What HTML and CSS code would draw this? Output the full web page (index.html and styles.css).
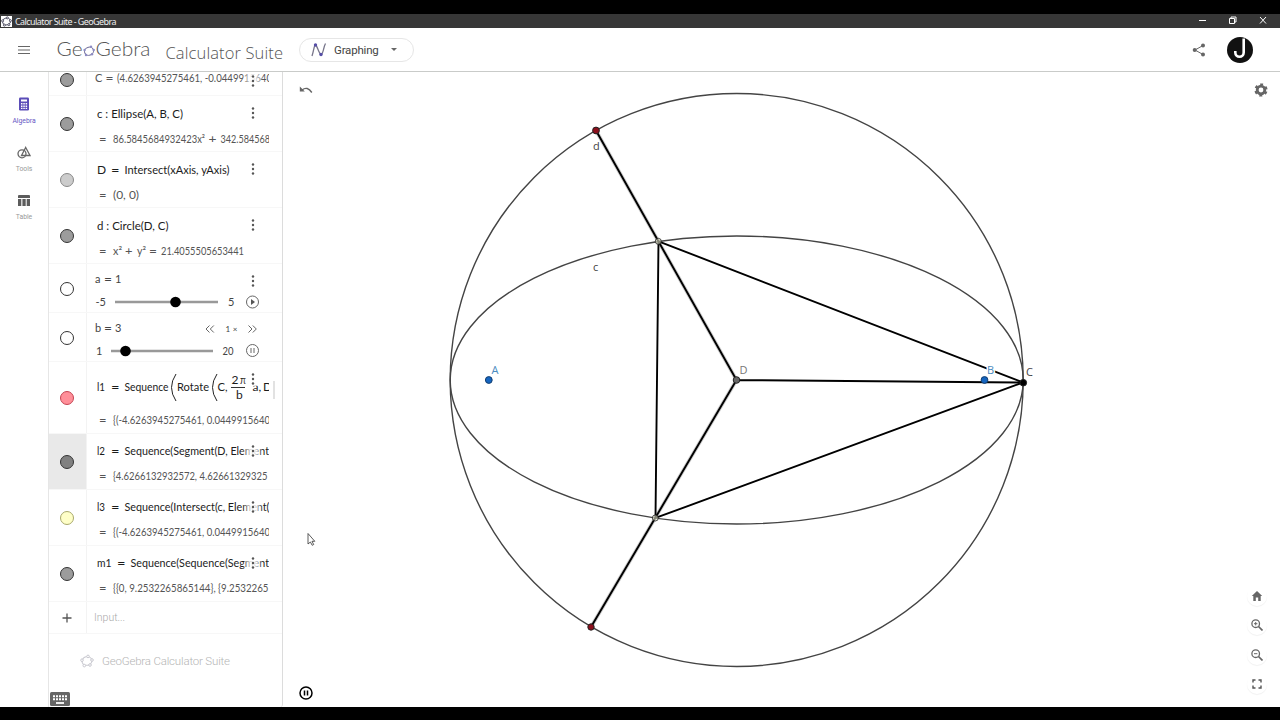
FILE: index.html
```
<!DOCTYPE html>
<html lang="en">
<head>
    <meta charset="UTF-8">
    <meta name="viewport" content="width=device-width, initial-scale=1.0">
    <title>Calculator Suite - GeoGebra</title>
    <link rel="stylesheet" href="styles.css">
</head>
<body>
    <svg width="0" height="0" class="defs">
        <symbol id="ggb" viewBox="0 0 14 14">
            <ellipse cx="7" cy="7" rx="5" ry="4.3" transform="rotate(-15 7 7)" fill="none" stroke="currentColor"/>
            <g fill="#fff" stroke="currentColor">
                <circle cx="8" cy="2.4" r="1.3"/><circle cx="12" cy="6" r="1.3"/><circle cx="10" cy="11" r="1.3"/>
                <circle cx="4.3" cy="11.6" r="1.3"/><circle cx="2" cy="6.2" r="1.3"/>
            </g>
        </symbol>
        <symbol id="dots" viewBox="0 0 4 14">
            <circle cx="2" cy="2.5" r="1.2"/><circle cx="2" cy="7" r="1.2"/><circle cx="2" cy="11.500" r="1.2"/>
        </symbol>
    </svg>

    <div class="titlebar">
        <div class="app-icon"><svg width="11" height="11"><use href="#ggb"/></svg></div>
        <span class="app-title">Calculator Suite - GeoGebra</span>
        <svg class="window-buttons" width="80" height="14" fill="none" stroke="#fff">
            <path d="M7 6.5h7"/>
            <path d="M37.5 4.5h5v5h-5zM39 4.500v-1.500h5v5h-1.500"/>
            <path d="M68 3l6 6.500M74 3l-6 6.500"/>
        </svg>
    </div>

    <header class="header">
        <svg class="menu" width="12" height="10" stroke="#666"><path d="M0 1.500h12M0 5h12M0 8.500h12"/></svg>
        <svg class="logo" width="236" height="30" viewBox="52 35 236 30">
            <text class="brand" x="56.500" y="56" textLength="26" lengthAdjust="spacingAndGlyphs">Ge</text>
            <ellipse cx="89" cy="51.200" rx="4.600" ry="4" transform="rotate(-20 89 51.200)" fill="none" stroke="#77759c"/>
            <g fill="#8d8bc4"><circle cx="91" cy="46.800" r="1.200"/><circle cx="93.700" cy="50" r="1.200"/><circle cx="92" cy="54.300" r="1.200"/><circle cx="86" cy="55" r="1.200"/><circle cx="84.600" cy="50" r="1.200"/></g>
            <text class="brand" x="95.500" y="56" textLength="55" lengthAdjust="spacingAndGlyphs">Gebra</text>
            <text class="suite" x="165.500" y="58.500" textLength="117.500">Calculator Suite</text>
        </svg>
        <div class="app-picker">
            <svg width="16" height="16" fill="none" stroke="#77758a" stroke-width="1.300">
                <path d="M1 14C3 8 3 3 4.500 3S8 12 10 12.500 12.500 5 14.500 1.500"/>
                <g fill="#554da6" stroke="none"><circle cx="4.500" cy="3" r="1.700"/><circle cx="10" cy="12.500" r="1.700"/></g>
            </svg>
            <span>Graphing</span>
            <i class="caret"></i>
        </div>
        <svg class="share" width="14" height="14" fill="#666" stroke="#666">
            <path d="M11 2.500L3 7l8 4.500" fill="none"/>
            <g stroke="none"><circle cx="11" cy="2.500" r="2"/><circle cx="2.700" cy="7" r="2"/><circle cx="11" cy="11.500" r="2"/></g>
        </svg>
        <svg class="avatar" width="26" height="26">
            <circle cx="13" cy="13" r="13" fill="#111"/>
            <path d="M16.700 1.500V15.500a4.200 4.200 0 0 1-8.400 0V14" fill="none" stroke="#fff" stroke-width="2.600"/>
        </svg>
    </header>

    <main class="main">
        <nav class="rail">
            <a class="tab active">
                <svg width="12" height="14">
                    <rect x="1" y=".5" width="10" height="13" rx="1.200" fill="#5b4db8"/>
                    <path d="M3 2.500h6v2H3zM3 6h1.500v1.500H3zM5.300 6h1.500v1.500H5.300zM7.600 6h1.500v1.500H7.600zM3 8.400h1.500v1.500H3zM5.300 8.400h1.500v1.500H5.300zM7.600 8.400h1.500v1.500H7.600zM3 10.700h1.500v1.300H3zM5.300 10.700h1.500v1.300H5.300zM7.600 10.700h1.500v1.300H7.600z" fill="#fff"/>
                </svg>
                <span>Algebra</span>
            </a>
            <a class="tab">
                <svg width="14" height="14" fill="none" stroke="#666" stroke-width="1.300">
                    <circle cx="5" cy="8.800" r="4"/><path d="M8.700 2.500l4.300 8H4.500z"/>
                </svg>
                <span>Tools</span>
            </a>
            <a class="tab">
                <svg width="14" height="14" fill="#5c5c5c"><path d="M1 3q0-1 1-1h10q1 0 1 1v2H1zM1 6h3.300v7H1zM5.400 6h3.300v7H5.400zM9.700 6H13v7H9.700z"/></svg>
                <span>Table</span>
            </a>
        </nav>

        <section class="algebra">
            <div class="row row-cut">
                <div class="marble"><i></i></div>
                <svg class="math value" width="182" height="32" viewBox="87 64 182 32">
                    <text x="95" y="82" textLength="7">C</text><text x="105.500" y="82" textLength="8" lengthAdjust="spacingAndGlyphs">=</text>
                    <text x="117" y="82" textLength="155" lengthAdjust="spacingAndGlyphs">(4.6263945275461, -0.0449915640</text>
                </svg>
                <svg class="more"><use href="#dots"/></svg>
            </div>
            <div class="row">
                <div class="marble"><i></i></div>
                <svg class="math" width="182" height="56" viewBox="87 96 182 56">
                    <text x="97" y="118" textLength="86" lengthAdjust="spacingAndGlyphs">c : Ellipse(A, B, C)</text>
                    <g class="value"><text x="99" y="142.500" textLength="7.500" lengthAdjust="spacingAndGlyphs">=</text>
                    <text x="113" y="142.500" textLength="92" lengthAdjust="spacingAndGlyphs">86.5845684932423x²</text>
                    <text x="208.500" y="142.500" textLength="8" lengthAdjust="spacingAndGlyphs">+</text>
                    <text x="220.500" y="142.500" textLength="49.500" lengthAdjust="spacingAndGlyphs">342.584568</text></g>
                </svg>
                <svg class="more"><use href="#dots"/></svg>
            </div>
            <div class="row">
                <div class="marble"><i class="light"></i></div>
                <svg class="math" width="182" height="56" viewBox="87 152 182 56">
                    <text x="97" y="174">D</text><text x="111" y="174" textLength="8.500" lengthAdjust="spacingAndGlyphs">=</text>
                    <text x="124.500" y="174" textLength="105" lengthAdjust="spacingAndGlyphs">Intersect(xAxis, yAxis)</text>
                    <g class="value"><text x="99" y="198.500" textLength="7.500" lengthAdjust="spacingAndGlyphs">=</text>
                    <text x="113" y="198.500" textLength="26" lengthAdjust="spacingAndGlyphs">(0, 0)</text></g>
                </svg>
                <svg class="more"><use href="#dots"/></svg>
            </div>
            <div class="row">
                <div class="marble"><i></i></div>
                <svg class="math" width="182" height="56" viewBox="87 208 182 56">
                    <text x="97" y="230" textLength="71.500" lengthAdjust="spacingAndGlyphs">d : Circle(D, C)</text>
                    <g class="value"><text x="99" y="254.500" textLength="7.500" lengthAdjust="spacingAndGlyphs">=</text>
                    <text x="113" y="254.500" textLength="9" lengthAdjust="spacingAndGlyphs">x²</text>
                    <text x="125" y="254.500" textLength="7.500" lengthAdjust="spacingAndGlyphs">+</text>
                    <text x="137" y="254.500" textLength="9" lengthAdjust="spacingAndGlyphs">y²</text>
                    <text x="149" y="254.500" textLength="8" lengthAdjust="spacingAndGlyphs">=</text>
                    <text x="161" y="254.500" textLength="83" lengthAdjust="spacingAndGlyphs">21.4055505653441</text></g>
                </svg>
                <svg class="more"><use href="#dots"/></svg>
            </div>
            <div class="row row-slider">
                <div class="marble"><i class="empty"></i></div>
                <svg class="math slider" width="182" height="49" viewBox="87 264 182 49">
                    <text x="95" y="282.500">a</text><text x="104" y="282.500" textLength="8" lengthAdjust="spacingAndGlyphs">=</text><text x="115" y="282.500">1</text>
                    <text x="95.500" y="305.500">-5</text><text x="228" y="305.500">5</text>
                    <path d="M115 302h103" class="track"/><circle cx="175.500" cy="302" r="5.300" fill="#000"/>
                    <circle cx="252.500" cy="302" r="6" class="ring"/><path d="M251 299l4 3-4 3z" fill="#555"/>
                </svg>
                <svg class="more"><use href="#dots"/></svg>
            </div>
            <div class="row row-slider">
                <div class="marble"><i class="empty"></i></div>
                <svg class="math slider" width="182" height="49" viewBox="87 313 182 49">
                    <text x="95" y="332">b</text><text x="104" y="332" textLength="8" lengthAdjust="spacingAndGlyphs">=</text><text x="115" y="332">3</text>
                    <text x="96" y="354.500">1</text><text x="222.500" y="354.500" textLength="11" lengthAdjust="spacingAndGlyphs">20</text>
                    <path d="M209.500 325.500l-3.500 3.500 3.500 3.500M213.800 325.500l-3.500 3.500 3.500 3.500M248.500 325.500l3.500 3.500-3.500 3.500M252.800 325.500l3.500 3.500-3.500 3.500" class="ring"/>
                    <text x="225.500" y="332" class="speed" textLength="12">1 ×</text>
                    <path d="M111 351h102" class="track"/><circle cx="125.500" cy="351" r="5.300" fill="#000"/>
                    <circle cx="252.500" cy="350.500" r="6" class="ring"/><path d="M251 348v5M254 348v5" class="ring"/>
                </svg>
            </div>
            <div class="row row-tall">
                <div class="marble"><i class="red"></i></div>
                <svg class="math" width="182" height="72" viewBox="87 362 182 72">
                    <text x="97" y="391" textLength="8" lengthAdjust="spacingAndGlyphs">l1</text><text x="111" y="391" textLength="8.500" lengthAdjust="spacingAndGlyphs">=</text>
                    <text x="124.500" y="391" textLength="44" lengthAdjust="spacingAndGlyphs">Sequence</text>
                    <path d="M176 374q-9 13.500 0 27M217 374q-9 13.500 0 27" fill="none" stroke="#222"/>
                    <text x="177" y="391" textLength="32" lengthAdjust="spacingAndGlyphs">Rotate</text>
                    <text x="217.500" y="391" textLength="10" lengthAdjust="spacingAndGlyphs">C,</text>
                    <text x="231.500" y="383.500">2</text><text x="240" y="383.500" textLength="6" lengthAdjust="spacingAndGlyphs">π</text>
                    <path d="M231 387.500h14" stroke="#333"/><text x="236" y="399">b</text>
                    <text x="252.500" y="391">a,</text><text x="263" y="391">D</text>
                    <g class="value"><text x="99" y="423.500" textLength="7.500" lengthAdjust="spacingAndGlyphs">=</text>
                    <text x="113" y="423.500" textLength="157" lengthAdjust="spacingAndGlyphs">{(-4.6263945275461, 0.0449915640</text></g>
                </svg>
                <svg class="more"><use href="#dots"/></svg>
                <b class="scroll-mark"></b>
            </div>
            <div class="row selected">
                <div class="marble"><i class="dark"></i></div>
                <svg class="math" width="182" height="56" viewBox="87 434 182 56">
                    <text x="97" y="455" textLength="8" lengthAdjust="spacingAndGlyphs">l2</text><text x="111" y="455" textLength="8.500" lengthAdjust="spacingAndGlyphs">=</text>
                    <text x="124.500" y="455" textLength="144.500" lengthAdjust="spacingAndGlyphs">Sequence(Segment(D, Element</text>
                    <g class="value"><text x="99" y="479.500" textLength="7.500" lengthAdjust="spacingAndGlyphs">=</text>
                    <text x="113" y="479.500" textLength="154.500" lengthAdjust="spacingAndGlyphs">{4.6266132932572, 4.62661329325</text></g>
                </svg>
                <svg class="more"><use href="#dots"/></svg>
            </div>
            <div class="row">
                <div class="marble"><i class="yellow"></i></div>
                <svg class="math" width="182" height="56" viewBox="87 490 182 56">
                    <text x="97" y="511" textLength="8" lengthAdjust="spacingAndGlyphs">l3</text><text x="111" y="511" textLength="8.500" lengthAdjust="spacingAndGlyphs">=</text>
                    <text x="124.500" y="511" textLength="145" lengthAdjust="spacingAndGlyphs">Sequence(Intersect(c, Element(</text>
                    <g class="value"><text x="99" y="535.500" textLength="7.500" lengthAdjust="spacingAndGlyphs">=</text>
                    <text x="113" y="535.500" textLength="157" lengthAdjust="spacingAndGlyphs">{(-4.6263945275461, 0.0449915640</text></g>
                </svg>
                <svg class="more"><use href="#dots"/></svg>
            </div>
            <div class="row">
                <div class="marble"><i></i></div>
                <svg class="math" width="182" height="56" viewBox="87 546 182 56">
                    <text x="97" y="567" textLength="14.500" lengthAdjust="spacingAndGlyphs">m1</text><text x="117" y="567" textLength="8.500" lengthAdjust="spacingAndGlyphs">=</text>
                    <text x="130.500" y="567" textLength="138.500" lengthAdjust="spacingAndGlyphs">Sequence(Sequence(Segment</text>
                    <g class="value"><text x="99" y="591.500" textLength="7.500" lengthAdjust="spacingAndGlyphs">=</text>
                    <text x="113" y="591.500" textLength="155.500" lengthAdjust="spacingAndGlyphs">{{0, 9.2532265865144}, {9.2532265</text></g>
                </svg>
                <svg class="more"><use href="#dots"/></svg>
            </div>
            <div class="row row-input">
                <div class="marble"><svg width="10" height="10" stroke="#555" stroke-width="1.300"><path d="M5 .5v9M.5 5h9"/></svg></div>
                <span class="placeholder">Input...</span>
            </div>
            <div class="watermark">
                <svg width="14" height="14"><use href="#ggb"/></svg>
                <svg width="130" height="18"><text x="1" y="13" textLength="128">GeoGebra Calculator Suite</text></svg>
            </div>
            <svg class="keyboard" width="20" height="14">
                <rect width="20" height="14" rx="1.500" fill="#666"/>
                <path d="M3 4.200h14M3 7.200h14" stroke="#fff" stroke-width="2" stroke-dasharray="2 1"/><path d="M6 11h8" stroke="#fff" stroke-width="1.800"/>
            </svg>
        </section>

        <section class="graphics">
            <svg class="plot" width="997" height="635" viewBox="283 72 997 635">
                <g fill="none" stroke="#444" stroke-width="1.400">
                    <circle cx="736.700" cy="380" r="286.500"/>
                    <ellipse cx="736.700" cy="380" rx="286.500" ry="144"/>
                </g>
                <g stroke="#999" stroke-width="3.600" opacity=".5"><path d="M736.500 380L596 130.500M736.500 380L591 627"/></g>
                <g fill="none" stroke="#000" stroke-width="1.900">
                    <path d="M596 130.500L736.500 380 591 627M736.500 380L1023 382.500"/>
                    <path d="M1023 382.500L658.500 241.300 655.500 518 1023 382.500"/>
                </g>
                <g stroke="#222">
                    <circle cx="596" cy="130.500" r="3.400" fill="#8c0f1c"/><circle cx="591" cy="627" r="3.200" fill="#8c0f1c"/>
                    <circle cx="658.300" cy="241.300" r="3" fill="#eef0d5" fill-opacity=".55" stroke-width=".8"/>
                    <circle cx="655.300" cy="518" r="3" fill="#eef0d5" fill-opacity=".55" stroke-width=".8"/>
                    <circle cx="736.500" cy="380" r="3.300" fill="#666"/>
                    <circle cx="1023.300" cy="382.700" r="3.300" fill="#000"/>
                    <circle cx="488.800" cy="380" r="3.400" fill="#1565c0" stroke="#123e70"/>
                    <circle cx="984.500" cy="380" r="3.400" fill="#1565c0" stroke="#123e70"/>
                </g>
                <g class="labels">
                    <text x="593" y="149.500">d</text><text x="593" y="271">c</text>
                    <text x="739.500" y="373.500" class="gray">D</text><text x="1026" y="376">C</text>
                    <text x="491.500" y="373.500" class="blue">A</text><text x="987" y="373.500" class="blue">B</text>
                </g>
                <path d="M308 533.500v10.500l2.400-2 1.800 3.300 1.500-.8-1.700-3.200h2.800z" fill="#fff" stroke="#333" stroke-width=".8"/>
            </svg>
            <svg class="undo" width="14" height="10"><path d="M3 5Q8.500 .8 12.800 7.500" fill="none" stroke="#666" stroke-width="1.400"/><path d="M.8 1.500v5h5z" fill="#666"/></svg>
            <svg class="settings" width="14" height="14">
                <circle cx="7" cy="7" r="3.800" fill="none" stroke="#666" stroke-width="2.800"/>
                <circle cx="7" cy="7" r="5.600" fill="none" stroke="#666" stroke-width="2" stroke-dasharray="2.900 2.960" transform="rotate(15 7 7)"/>
            </svg>
            <svg class="play" width="14" height="14" fill="none" stroke="#000" stroke-width="1.500"><circle cx="7" cy="7" r="6"/><path d="M5.500 4.500v5M8.500 4.500v5"/></svg>
            <div class="zoom-tools">
                <a><svg width="12" height="12" fill="#666"><path d="M6 1L.8 6h1.500v5h2.500V7.500h2.400V11h2.500V6h1.500z"/></svg></a>
                <a><svg width="12" height="12" fill="none" stroke="#666" stroke-width="1.300"><circle cx="4.700" cy="4.700" r="3.800"/><path d="M7.500 7.500l4 4" stroke-width="1.700"/><path d="M3 4.700h3.400M4.700 3v3.400" stroke-width="1"/></svg></a>
                <a><svg width="12" height="12" fill="none" stroke="#666" stroke-width="1.300"><circle cx="4.700" cy="4.700" r="3.800"/><path d="M7.500 7.500l4 4" stroke-width="1.700"/><path d="M3 4.700h3.400" stroke-width="1"/></svg></a>
                <a><svg width="12" height="12" fill="none" stroke="#555" stroke-width="1.400"><path d="M2 4.500V2h2.500M7.500 2H10v2.500M10 7.500V10H7.500M4.500 10H2V7.500"/></svg></a>
            </div>
        </section>
    </main>
</body>
</html>
```
FILE: styles.css
```
* {
    box-sizing: border-box;
}

body {
    margin: 0;
    width: 1280px;
    height: 720px;
    overflow: hidden;
    display: flex;
    flex-direction: column;
    padding: 14px 0 13px;
    background: #000;
    font-family: Roboto, sans-serif;
}

svg {
    display: block;
    flex-shrink: 0;
}

.defs {
    position: absolute;
}

.titlebar {
    height: 14px;
    flex-shrink: 0;
    display: flex;
    align-items: center;
    background: #373737;
    color: #fff;
}

.app-icon {
    margin-left: 1px;
    padding: 0;
    background: #fff;
    color: #33334a;
}

.app-title {
    margin-left: 3px;
    font: 9px "Noto Sans", sans-serif;
    letter-spacing: -0.6px;
    letter-spacing: -0.58px;
    color: #eee;
}

.window-buttons {
    margin-left: auto;
    margin-right: 8px;
}

.header {
    height: 44px;
    flex-shrink: 0;
    display: flex;
    align-items: center;
    padding: 0 27px 0 18px;
    background: #fff;
    border-bottom: 1px solid #c9cbc9;
}

.logo {
    margin-left: 22px;
}

.brand {
    font: 300 20px Lato, sans-serif;
    fill: #555;
}

.suite {
    font: 300 16.5px "Open Sans", sans-serif;
    fill: #555;
}

.app-picker {
    display: flex;
    align-items: center;
    width: 115px;
    height: 24px;
    margin-left: 11px;
    padding-left: 11px;
    border: 1px solid #e6e6e6;
    border-radius: 12px;
    font-size: 11.5px;
    color: #444;
}

.app-picker span {
    width: 44px;
    margin-left: 7px;
    letter-spacing: -0.2px;
}

.caret {
    margin-left: 13px;
    border: 3px solid transparent;
    border-top-color: #666;
    border-bottom: 0;
}

.share {
    margin-left: auto;
}

.avatar {
    margin-left: 21px;
}

.main {
    flex: 1;
    min-height: 0;
    display: flex;
    background: #fff;
}

.rail {
    width: 48px;
    padding-top: 25px;
    display: flex;
    flex-direction: column;
    align-items: center;
    gap: 21px;
}

.tab {
    display: flex;
    flex-direction: column;
    align-items: center;
    gap: 6px;
    height: 27px;
    font-size: 6.8px;
    line-height: 8px;
    color: #999;
}

.tab.active {
    color: #6557c4;
}

.algebra {
    position: relative;
    width: 235px;
    height: 635px;
    overflow: hidden;
    border-left: 1px solid #e6e6e6;
    border-right: 1px solid #dcdcdc;
    border-bottom-right-radius: 3px;
}

.row {
    position: relative;
    display: flex;
    height: 56px;
    border-bottom: 1px solid #f7f7f7;
}

.row-cut {
    height: 32px;
    margin-top: -8px;
}

.row-slider {
    height: 49px;
}

.row-tall {
    height: 72px;
}

.row-input {
    height: 32px;
    align-items: center;
}

.marble {
    width: 38px;
    align-self: stretch;
    display: flex;
    align-items: center;
    justify-content: center;
    padding: 1px 1px 0 0;
    border-right: 1px solid #f3f3f3;
}

.marble i {
    width: 14px;
    height: 14px;
    border: 1px solid #333;
    border-radius: 50%;
    background: #9c9c9c;
}

.marble i.light {
    background: #ccc;
    border-color: #888;
}

.marble i.empty {
    background: #fff;
}

.marble i.red {
    background: #ff8f99;
    border-color: #c54452;
}

.marble i.dark {
    background: #808080;
}

.marble i.yellow {
    background: #ffffc8;
    border-color: #a9a96c;
}

.selected .marble {
    background: #e9e9e9;
}

.math {
    font: 12px Lato, sans-serif;
    fill: #1c1c1c;
}

.value {
    font-size: 11px;
    fill: #555;
}

.slider {
    font-size: 11px;
    fill: #444;
}

.math .speed {
    font-size: 8px;
}

.track {
    stroke: #999;
    stroke-width: 2.4;
}

.ring {
    fill: none;
    stroke: #666;
}

/* three dot menu, fades the formula below it */
.more {
    position: absolute;
    left: 193.5px;
    top: 10px;
    width: 20px;
    height: 14px;
    fill: #555;
    background: linear-gradient(to right, rgba(255,255,255,0), rgba(255,255,255,0.85) 40%, rgba(255,255,255,0.85) 60%, rgba(255,255,255,0));
}

.scroll-mark {
    position: absolute;
    left: 224px;
    top: 19px;
    width: 2px;
    height: 18px;
    background: #e2e2e2;
}

.placeholder {
    margin-left: 7px;
    font-size: 10.5px;
    color: #aaa;
    font-weight: 300;
    letter-spacing: 0px;
}

.watermark {
    display: flex;
    align-items: center;
    gap: 7px;
    margin: 18px 0 0 31px;
    color: #c9c9d0;
    font-size: 11.5px;
    font-weight: 300;
    fill: #b5b5b5;
}

.keyboard {
    position: absolute;
    left: 1px;
    bottom: 1px;
}

.graphics {
    position: relative;
    width: 997px;
    height: 635px;
}

.labels {
    font: 11px "Open Sans", sans-serif;
    fill: #444;
}

.labels .gray {
    fill: #777;
}

.labels .blue {
    fill: #4b8bc0;
    stroke: #fff;
    stroke-width: 3px;
    paint-order: stroke;
}

.undo {
    position: absolute;
    left: 16px;
    top: 13px;
}

.settings {
    position: absolute;
    right: 12px;
    top: 11px;
}

.play {
    position: absolute;
    left: 16px;
    bottom: 7px;
}

.zoom-tools {
    position: absolute;
    right: 13px;
    bottom: 13px;
    display: flex;
    flex-direction: column;
    gap: 9.5px;
}

.zoom-tools a {
    display: flex;
    align-items: center;
    justify-content: center;
    width: 20px;
    height: 20px;
    border-radius: 50%;
    box-shadow: 0 1px 1px rgba(0, 0, 0, 0.06);
}
```
